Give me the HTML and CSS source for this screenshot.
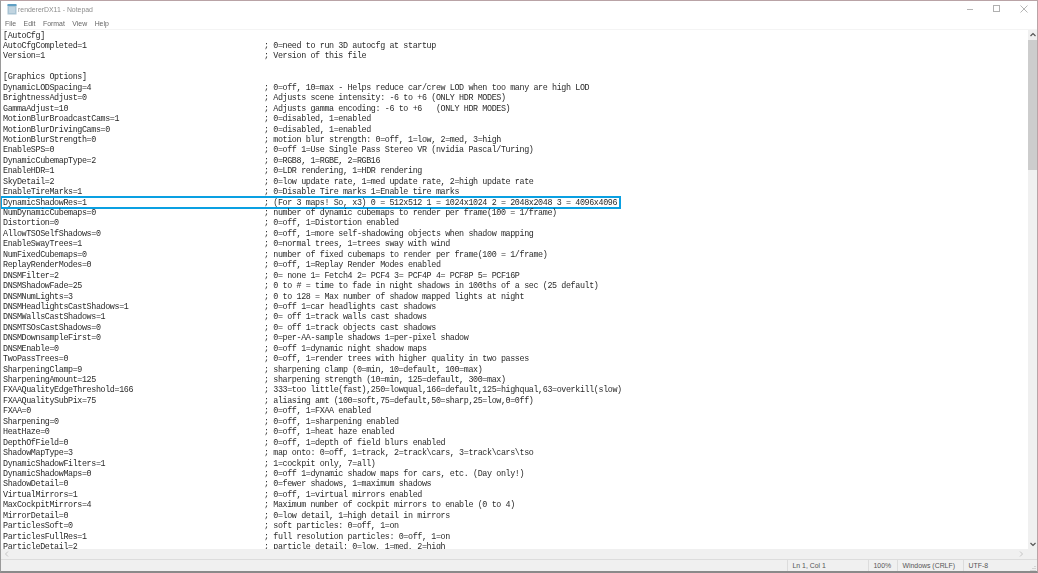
FILE: index.html
```html
<!DOCTYPE html>
<html lang="en">
<head>
<meta charset="utf-8">
<title>rendererDX11 - Notepad</title>
<link rel="stylesheet" href="styles.css">
</head>
<body>
<div class="window">
  <header class="titlebar">
    <svg class="app-icon" width="10" height="11" viewBox="0 0 10 11"><rect x="0.5" y="1" width="9" height="9.5" fill="#a9c4d4"/><rect x="0.5" y="0" width="9" height="2" fill="#5f9fc4"/><path d="M2 4H8M2 6H8M2 8H8" stroke="#e6eef3" stroke-width=".8"/></svg>
    <span class="title">rendererDX11 - Notepad</span>
    <span class="controls">
      <svg width="10" height="10" viewBox="0 0 10 10"><path d="M2 5.5H8" stroke="#b5b5b5" fill="none"/></svg>
      <svg width="10" height="10" viewBox="0 0 10 10"><rect x="1.5" y="1.5" width="6" height="6" stroke="#b0b0b0" fill="none"/></svg>
      <svg width="10" height="10" viewBox="0 0 10 10"><path d="M1.5 1.5L8.5 8.5M8.5 1.5L1.5 8.5" stroke="#b5b5b5" fill="none"/></svg>
    </span>
  </header>
  <nav class="menu"><span>File</span><span>Edit</span><span>Format</span><span>View</span><span>Help</span></nav>
  <div class="editor">
    <div class="lines">
      <div class="line"><span class="k">[AutoCfg]</span></div>
      <div class="line"><span class="k">AutoCfgCompleted=1</span><span>; 0=need to run 3D autocfg at startup</span></div>
      <div class="line"><span class="k">Version=1</span><span>; Version of this file</span></div>
      <div class="line"></div>
      <div class="line"><span class="k">[Graphics Options]</span></div>
      <div class="line"><span class="k">DynamicLODSpacing=4</span><span>; 0=off, 10=max - Helps reduce car/crew LOD when too many are high LOD</span></div>
      <div class="line"><span class="k">BrightnessAdjust=0</span><span>; Adjusts scene intensity: -6 to +6 (ONLY HDR MODES)</span></div>
      <div class="line"><span class="k">GammaAdjust=10</span><span>; Adjusts gamma encoding: -6 to +6   (ONLY HDR MODES)</span></div>
      <div class="line"><span class="k">MotionBlurBroadcastCams=1</span><span>; 0=disabled, 1=enabled</span></div>
      <div class="line"><span class="k">MotionBlurDrivingCams=0</span><span>; 0=disabled, 1=enabled</span></div>
      <div class="line"><span class="k">MotionBlurStrength=0</span><span>; motion blur strength: 0=off, 1=low, 2=med, 3=high</span></div>
      <div class="line"><span class="k">EnableSPS=0</span><span>; 0=off 1=Use Single Pass Stereo VR (nvidia Pascal/Turing)</span></div>
      <div class="line"><span class="k">DynamicCubemapType=2</span><span>; 0=RGB8, 1=RGBE, 2=RGB16</span></div>
      <div class="line"><span class="k">EnableHDR=1</span><span>; 0=LDR rendering, 1=HDR rendering</span></div>
      <div class="line"><span class="k">SkyDetail=2</span><span>; 0=low update rate, 1=med update rate, 2=high update rate</span></div>
      <div class="line"><span class="k">EnableTireMarks=1</span><span>; 0=Disable Tire marks 1=Enable tire marks</span></div>
      <div class="line marked"><span class="k">DynamicShadowRes=1</span><span>; (For 3 maps! So, x3) 0 = 512x512 1 = 1024x1024 2 = 2048x2048 3 = 4096x4096</span></div>
      <div class="line"><span class="k">NumDynamicCubemaps=0</span><span>; number of dynamic cubemaps to render per frame(100 = 1/frame)</span></div>
      <div class="line"><span class="k">Distortion=0</span><span>; 0=off, 1=Distortion enabled</span></div>
      <div class="line"><span class="k">AllowTSOSelfShadows=0</span><span>; 0=off, 1=more self-shadowing objects when shadow mapping</span></div>
      <div class="line"><span class="k">EnableSwayTrees=1</span><span>; 0=normal trees, 1=trees sway with wind</span></div>
      <div class="line"><span class="k">NumFixedCubemaps=0</span><span>; number of fixed cubemaps to render per frame(100 = 1/frame)</span></div>
      <div class="line"><span class="k">ReplayRenderModes=0</span><span>; 0=off, 1=Replay Render Modes enabled</span></div>
      <div class="line"><span class="k">DNSMFilter=2</span><span>; 0= none 1= Fetch4 2= PCF4 3= PCF4P 4= PCF8P 5= PCF16P</span></div>
      <div class="line"><span class="k">DNSMShadowFade=25</span><span>; 0 to # = time to fade in night shadows in 100ths of a sec (25 default)</span></div>
      <div class="line"><span class="k">DNSMNumLights=3</span><span>; 0 to 128 = Max number of shadow mapped lights at night</span></div>
      <div class="line"><span class="k">DNSMHeadlightsCastShadows=1</span><span>; 0=off 1=car headlights cast shadows</span></div>
      <div class="line"><span class="k">DNSMWallsCastShadows=1</span><span>; 0= off 1=track walls cast shadows</span></div>
      <div class="line"><span class="k">DNSMTSOsCastShadows=0</span><span>; 0= off 1=track objects cast shadows</span></div>
      <div class="line"><span class="k">DNSMDownsampleFirst=0</span><span>; 0=per-AA-sample shadows 1=per-pixel shadow</span></div>
      <div class="line"><span class="k">DNSMEnable=0</span><span>; 0=off 1=dynamic night shadow maps</span></div>
      <div class="line"><span class="k">TwoPassTrees=0</span><span>; 0=off, 1=render trees with higher quality in two passes</span></div>
      <div class="line"><span class="k">SharpeningClamp=9</span><span>; sharpening clamp (0=min, 10=default, 100=max)</span></div>
      <div class="line"><span class="k">SharpeningAmount=125</span><span>; sharpening strength (10=min, 125=default, 300=max)</span></div>
      <div class="line"><span class="k">FXAAQualityEdgeThreshold=166</span><span>; 333=too little(fast),250=lowqual,166=default,125=highqual,63=overkill(slow)</span></div>
      <div class="line"><span class="k">FXAAQualitySubPix=75</span><span>; aliasing amt (100=soft,75=default,50=sharp,25=low,0=0ff)</span></div>
      <div class="line"><span class="k">FXAA=0</span><span>; 0=off, 1=FXAA enabled</span></div>
      <div class="line"><span class="k">Sharpening=0</span><span>; 0=off, 1=sharpening enabled</span></div>
      <div class="line"><span class="k">HeatHaze=0</span><span>; 0=off, 1=heat haze enabled</span></div>
      <div class="line"><span class="k">DepthOfField=0</span><span>; 0=off, 1=depth of field blurs enabled</span></div>
      <div class="line"><span class="k">ShadowMapType=3</span><span>; map onto: 0=off, 1=track, 2=track\cars, 3=track\cars\tso</span></div>
      <div class="line"><span class="k">DynamicShadowFilters=1</span><span>; 1=cockpit only, 7=all)</span></div>
      <div class="line"><span class="k">DynamicShadowMaps=0</span><span>; 0=off 1=dynamic shadow maps for cars, etc. (Day only!)</span></div>
      <div class="line"><span class="k">ShadowDetail=0</span><span>; 0=fewer shadows, 1=maximum shadows</span></div>
      <div class="line"><span class="k">VirtualMirrors=1</span><span>; 0=off, 1=virtual mirrors enabled</span></div>
      <div class="line"><span class="k">MaxCockpitMirrors=4</span><span>; Maximum number of cockpit mirrors to enable (0 to 4)</span></div>
      <div class="line"><span class="k">MirrorDetail=0</span><span>; 0=low detail, 1=high detail in mirrors</span></div>
      <div class="line"><span class="k">ParticlesSoft=0</span><span>; soft particles: 0=off, 1=on</span></div>
      <div class="line"><span class="k">ParticlesFullRes=1</span><span>; full resolution particles: 0=off, 1=on</span></div>
      <div class="line"><span class="k">ParticleDetail=2</span><span>; particle detail: 0=low, 1=med, 2=high</span></div>
    </div>
    <div class="vscroll">
      <svg class="arrow" width="10" height="10" viewBox="0 0 10 10"><path d="M2.5 6L5 3.5L7.5 6" stroke="#555" stroke-width="1.2" fill="none"/></svg>
      <div class="track"><div class="thumb"></div></div>
      <svg class="arrow" width="10" height="10" viewBox="0 0 10 10"><path d="M2.5 4L5 6.5L7.5 4" stroke="#555" stroke-width="1.2" fill="none"/></svg>
    </div>
  </div>
  <div class="hscroll">
    <svg class="arrow" width="10" height="10" viewBox="0 0 10 10"><path d="M6 2.5L3.5 5L6 7.5" stroke="#c4c4c4" fill="none"/></svg>
    <svg class="arrow" width="10" height="10" viewBox="0 0 10 10"><path d="M4 2.5L6.5 5L4 7.5" stroke="#c4c4c4" fill="none"/></svg>
  </div>
  <footer class="status">
    <span class="cell pos">Ln 1, Col 1</span>
    <span class="cell zoom">100%</span>
    <span class="cell eol">Windows (CRLF)</span>
    <span class="cell enc">UTF-8</span>
    <svg class="grip" width="6" height="6" viewBox="0 0 6 6"><path d="M5 1V2M3 3V4M5 3V4M1 5V6M3 5V6M5 5V6" stroke="#b8b8b8" fill="none"/></svg>
  </footer>
</div>
</body>
</html>
```
FILE: styles.css
```css
html, body { margin: 0; padding: 0; background: #fff; overflow: hidden; }
.window {
  box-sizing: border-box;
  width: 1038px;
  height: 573px;
  display: flex;
  flex-direction: column;
  background: #fff;
  border: 1px solid #b9a3a6;
  border-bottom: 2px solid #8a8a8a;
  border-left-color: #9a9a9a;
  overflow: hidden;
}
.titlebar {
  flex: none;
  height: 17px;
  display: flex;
  align-items: center;
  padding-left: 6px;
  gap: 1px;
}
.title { font: 6.9px "Liberation Sans", Arial, sans-serif; color: #8c8c8c; filter: blur(.25px); }
.controls { margin-left: auto; display: flex; gap: 17px; margin-right: 8px; margin-top: -1px; }
.menu {
  flex: none;
  height: 11px;
  display: flex;
  align-items: center;
  padding-left: 4px;
  gap: 7.5px;
  font: 6.9px "Liberation Sans", Arial, sans-serif;
  color: #666;
  border-bottom: 1px solid #f4f4f4;
  filter: blur(.2px);
}
.editor { flex: 1; min-height: 0; display: flex; }
.lines {
  flex: 1;
  min-width: 0;
  overflow: hidden;
  padding: 0.6px 0 0 2px;
  font: 8.4px/10.45px "Liberation Mono", monospace;
  letter-spacing: -0.38px;
  color: #2a2a2a;
  filter: blur(.25px);
}
.line { position: relative; display: flex; height: 10.45px; white-space: pre; }
.k { flex: none; width: 261px; }
.marked::after {
  content: "";
  position: absolute;
  left: -3px;
  top: -1.7px;
  width: 617px;
  height: 9px;
  border: 2.5px solid #0aa0e2;
}
.vscroll {
  flex: none;
  width: 9px;
  background: #f0f0f0;
  display: flex;
  flex-direction: column;
  align-items: center;
}
.arrow { flex: none; }
.track { flex: 1; width: 100%; }
.thumb { height: 130px; background: #cdcdcd; }
.hscroll {
  flex: none;
  height: 10px;
  background: #f0f0f0;
  display: flex;
  justify-content: space-between;
  padding-left: 1px;
  padding-right: 11px;
}
.status {
  flex: none;
  height: 11px;
  background: #f0f0f0;
  border-top: 1px solid #dcdcdc;
  display: flex;
  justify-content: flex-end;
  position: relative;
  font: 6.9px/11px "Liberation Sans", Arial, sans-serif;
  color: #555;
}
.cell { box-sizing: border-box; border-left: 1px solid #dcdcdc; padding-left: 4.5px; }
.pos { width: 81px; }
.zoom { width: 29px; }
.eol { width: 66px; }
.enc { width: 74px; }
.grip { position: absolute; right: 1px; bottom: 0; }
```
